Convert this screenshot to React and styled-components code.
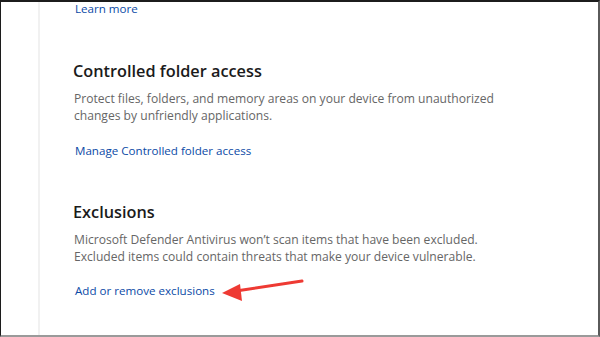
import styled, { createGlobalStyle } from "styled-components";

const GlobalStyle = createGlobalStyle`
  html, body {
    margin: 0;
    padding: 0;
    background: #ffffff;
  }
  body {
    font-family: "Open Sans", "Noto Sans", "Liberation Sans", sans-serif;
  }
`;

const Frame = styled.div`
  position: relative;
  width: 600px;
  height: 337px;
  box-sizing: border-box;
  border-top: 2px solid #1c1c1c;
  border-left: 1px solid #1c1c1c;
  border-right: 2px solid #5a5a5a;
  border-bottom: 2px solid #9a9a9a;
  display: flex;
  overflow: hidden;
  background: #fff;
`;

const Rail = styled.div`
  width: 37px;
  flex-shrink: 0;
  border-right: 2px solid #f1f1f1;
`;

const Content = styled.div`
  flex: 1;
  padding: 0 0 0 33px;
  display: flex;
  flex-direction: column;
`;

const Section = styled.section`
  display: flex;
  flex-direction: column;
  align-items: flex-start;
  margin-top: ${(p) => p.$gap || 0}px;
`;

const Heading = styled.h2`
  margin: 0;
  font-size: 16.3px;
  font-weight: 600;
  color: #1b1b1b;
  line-height: 24px;
`;

const Desc = styled.p`
  margin: 7px 0 0 1px;
  font-size: 12.1px;
  line-height: 17px;
  color: #666666;
`;

const Link = styled.a`
  margin-left: 2px;
  margin-top: ${(p) => p.$top || 0}px;
  font-size: 11.6px;
  line-height: 18px;
  color: #0b4aa6;
  text-decoration: none;
  cursor: pointer;
`;

const Arrow = styled.svg`
  position: absolute;
  left: 215px;
  top: 270px;
`;

export default function App() {
  return (
    <>
      <GlobalStyle />
      <Frame>
        <Rail />
        <Content>
          <Link $top={-2}>Learn more</Link>
          <Section $gap={41}>
            <Heading>Controlled folder access</Heading>
            <Desc>
              Protect files, folders, and memory areas on your device from unauthorized
              <br />
              changes by unfriendly applications.
            </Desc>
            <Link $top={18}>Manage Controlled folder access</Link>
          </Section>
          <Section $gap={40}>
            <Heading>Exclusions</Heading>
            <Desc>
              Microsoft Defender Antivirus won’t scan items that have been excluded.
              <br />
              Excluded items could contain threats that make your device vulnerable.
            </Desc>
            <Link $top={17}>Add or remove exclusions</Link>
          </Section>
        </Content>
        <Arrow width="90" height="32" viewBox="0 0 90 32">
          <line x1="20" y1="19" x2="86" y2="9" stroke="#ee3a33" strokeWidth="3" strokeLinecap="round" />
          <polygon points="6,21 24,12 26,29" fill="#ee3a33" />
        </Arrow>
      </Frame>
    </>
  );
}
